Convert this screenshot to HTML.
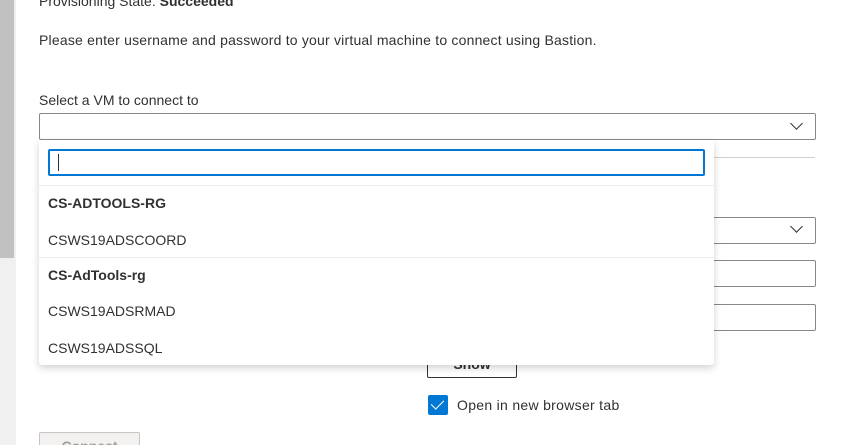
<!DOCTYPE html>
<html style="width:853px;height:445px;overflow:hidden"><head><style>
*{box-sizing:border-box;margin:0;padding:0}
body{width:853px;height:445px;overflow:hidden;background:#fff;font-family:"Liberation Sans",sans-serif;font-size:14px;color:#323130;position:relative}
.a{position:absolute}
.inp{position:absolute;border:1px solid #8a8886;border-radius:2px;background:#fff}
.chev{position:absolute;width:9px;height:9px;border-right:1.3px solid #323130;border-bottom:1.3px solid #323130;transform:rotate(45deg)}
.item{position:absolute;left:9px;font-size:14px}
.sb{font-weight:600}
</style></head><body>
<div class="a" style="left:0;top:0;width:16px;height:445px;background:#f0f0f0"></div>
<div class="a" style="left:0;top:0;width:14px;height:258px;background:#c1c1c1"></div>
<div class="a" style="left:39px;top:-7px">Provisioning State: <b>Succeeded</b></div>
<div class="a" style="left:39px;top:32px;letter-spacing:0.2px">Please enter username and password to your virtual machine to connect using Bastion.</div>
<div class="a" style="left:39px;top:92px">Select a VM to connect to</div>
<div class="inp" style="left:39px;top:113px;width:777px;height:27px"></div>
<div class="chev" style="left:792px;top:119px"></div>
<div class="a" style="left:714px;top:157px;width:101px;height:1px;background:#d0d0d0"></div>
<div class="inp" style="left:700px;top:217px;width:116px;height:27px"></div>
<div class="chev" style="left:792px;top:222px"></div>
<div class="inp" style="left:700px;top:260px;width:116px;height:27px"></div>
<div class="inp" style="left:700px;top:304px;width:116px;height:27px"></div>
<div class="a sb" style="left:427px;top:350px;width:90px;height:28px;border:1px solid #323130;border-radius:2px;text-align:center;line-height:26px">Show</div>
<div class="a" style="left:428px;top:395px;width:20px;height:20px;background:#0078d4;border-radius:2px"></div>
<div class="a" style="left:434px;top:397px;width:7px;height:12px;border-right:1.3px solid #fff;border-bottom:1.3px solid #fff;transform:rotate(45deg)"></div>
<div class="a" style="left:457px;top:397px;letter-spacing:0.3px">Open in new browser tab</div>
<div class="a sb" style="left:39px;top:432px;width:101px;height:28px;border:1px solid #c8c6c4;border-radius:2px;background:#f3f2f1;color:#a19f9d;text-align:center;line-height:26px">Connect</div>
<div class="a" style="left:39px;top:140px;width:675px;height:225px;background:#fff;border-radius:0 0 3px 3px;box-shadow:0 3px 8px rgba(0,0,0,.18)">
 <div class="a" style="left:9px;top:9px;width:657px;height:27px;border:2px solid #0078d4;border-radius:2px"></div>
 <div class="a" style="left:19px;top:14px;width:1px;height:17px;background:#323130"></div>
 <div class="a" style="left:0;top:45px;width:675px;height:1px;background:#edebe9"></div>
 <div class="item sb" style="top:55px">CS-ADTOOLS-RG</div>
 <div class="item" style="top:92px">CSWS19ADSCOORD</div>
 <div class="a" style="left:0;top:117px;width:675px;height:1px;background:#edebe9"></div>
 <div class="item sb" style="top:127px">CS-AdTools-rg</div>
 <div class="item" style="top:163px">CSWS19ADSRMAD</div>
 <div class="item" style="top:200px">CSWS19ADSSQL</div>
</div>
</body></html>
